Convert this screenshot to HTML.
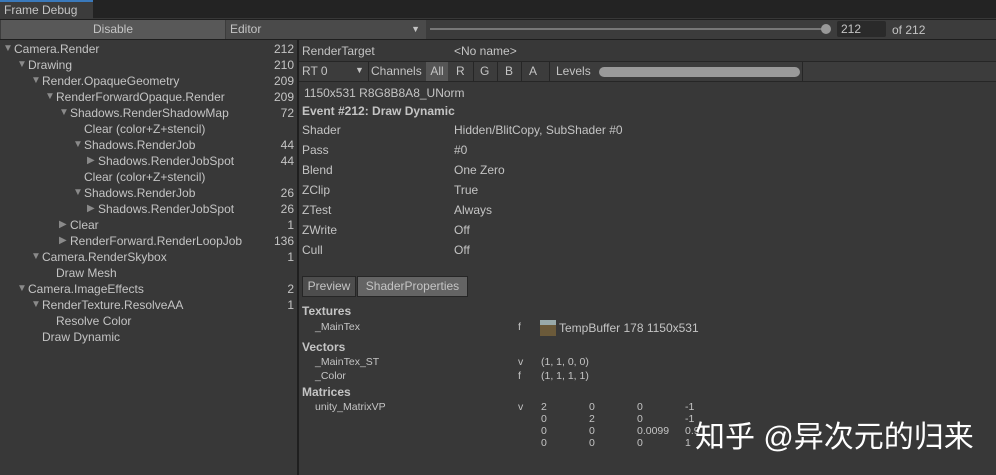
<!DOCTYPE html><html><head><style>
body{margin:0;width:996px;height:475px;background:#383838;font-family:"Liberation Sans",sans-serif;color:#c4c4c4;font-size:12px;position:relative;overflow:hidden}
.a{position:absolute;white-space:nowrap}
.t{position:absolute;white-space:nowrap}
.t i{position:absolute;left:-11px;top:0;font-style:normal;font-size:10px;color:#8a8a8a}
.s{font-size:10.5px}
</style></head><body>
<div class="a" style="left:0;top:0;width:996px;height:18px;background:#232323"></div>
<div class="a" style="left:0;top:0;width:93px;height:2px;background:#3a79bb"></div>
<div class="a" style="left:0;top:2px;width:93px;height:17px;background:#3c3c3c;line-height:17px;padding-left:4px;box-sizing:border-box">Frame Debug</div>
<div class="a" style="left:0;top:19px;width:996px;height:21px;background:#3c3c3c;border-top:1px solid #1e1e1e;border-bottom:1px solid #1e1e1e;box-sizing:border-box"></div>
<div class="a" style="left:1px;top:20px;width:224px;height:19px;background:#585858;text-align:center;line-height:19px">Disable</div>
<div class="a" style="left:226px;top:20px;width:200px;height:19px;background:#4a4a4a;line-height:19px;padding-left:4px;box-sizing:border-box">Editor<span style="position:absolute;right:6px;font-size:9px">▼</span></div>
<div class="a" style="left:430px;top:28px;width:396px;height:2px;background:#777"></div>
<div class="a" style="left:821px;top:24px;width:10px;height:10px;border-radius:50%;background:#999"></div>
<div class="a" style="left:837px;top:21px;width:49px;height:16px;background:#2a2a2a;border-radius:2px;line-height:16px;padding-left:4px;box-sizing:border-box">212</div>
<div class="a" style="left:892px;top:22px;line-height:16px">of 212</div>
<div class="a" style="left:297px;top:40px;width:2px;height:435px;background:#1f1f1f"></div>
<div style="position:absolute;left:0;top:41px;width:296px;line-height:16px">
<div class="t" style="top:0;left:14px"><i>▼</i>Camera.Render</div><div class="a" style="top:0;right:2px">212</div>
<div class="t" style="top:16px;left:28px"><i>▼</i>Drawing</div><div class="a" style="top:16px;right:2px">210</div>
<div class="t" style="top:32px;left:42px"><i>▼</i>Render.OpaqueGeometry</div><div class="a" style="top:32px;right:2px">209</div>
<div class="t" style="top:48px;left:56px"><i>▼</i>RenderForwardOpaque.Render</div><div class="a" style="top:48px;right:2px">209</div>
<div class="t" style="top:64px;left:70px"><i>▼</i>Shadows.RenderShadowMap</div><div class="a" style="top:64px;right:2px">72</div>
<div class="t" style="top:80px;left:84px">Clear (color+Z+stencil)</div>
<div class="t" style="top:96px;left:84px"><i>▼</i>Shadows.RenderJob</div><div class="a" style="top:96px;right:2px">44</div>
<div class="t" style="top:112px;left:98px"><i>▶</i>Shadows.RenderJobSpot</div><div class="a" style="top:112px;right:2px">44</div>
<div class="t" style="top:128px;left:84px">Clear (color+Z+stencil)</div>
<div class="t" style="top:144px;left:84px"><i>▼</i>Shadows.RenderJob</div><div class="a" style="top:144px;right:2px">26</div>
<div class="t" style="top:160px;left:98px"><i>▶</i>Shadows.RenderJobSpot</div><div class="a" style="top:160px;right:2px">26</div>
<div class="t" style="top:176px;left:70px"><i>▶</i>Clear</div><div class="a" style="top:176px;right:2px">1</div>
<div class="t" style="top:192px;left:70px"><i>▶</i>RenderForward.RenderLoopJob</div><div class="a" style="top:192px;right:2px">136</div>
<div class="t" style="top:208px;left:42px"><i>▼</i>Camera.RenderSkybox</div><div class="a" style="top:208px;right:2px">1</div>
<div class="t" style="top:224px;left:56px">Draw Mesh</div>
<div class="t" style="top:240px;left:28px"><i>▼</i>Camera.ImageEffects</div><div class="a" style="top:240px;right:2px">2</div>
<div class="t" style="top:256px;left:42px"><i>▼</i>RenderTexture.ResolveAA</div><div class="a" style="top:256px;right:2px">1</div>
<div class="t" style="top:272px;left:56px">Resolve Color</div>
<div class="t" style="top:288px;left:42px">Draw Dynamic</div>
</div>
<div class="a" style="left:302px;top:44px">RenderTarget</div><div class="a" style="left:454px;top:44px">&lt;No name&gt;</div>
<div class="a" style="left:299px;top:61px;width:697px;height:21px;background:#3c3c3c;border-top:1px solid #262626;border-bottom:1px solid #262626;box-sizing:border-box"></div>
<div class="a" style="left:302px;top:64px">RT 0</div><div class="a" style="left:355px;top:65px;font-size:9px">▼</div>
<div class="a" style="left:368px;top:62px;width:1px;height:19px;background:#262626"></div>
<div class="a" style="left:371px;top:64px">Channels</div>
<div class="a" style="left:426px;top:62px;width:22px;height:19px;background:#555;text-align:center;line-height:19px">All</div>
<div class="a" style="left:456px;top:64px">R</div><div class="a" style="left:480px;top:64px">G</div><div class="a" style="left:505px;top:64px">B</div><div class="a" style="left:529px;top:64px">A</div>
<div class="a" style="left:473px;top:62px;width:1px;height:19px;background:#262626"></div><div class="a" style="left:497px;top:62px;width:1px;height:19px;background:#262626"></div><div class="a" style="left:521px;top:62px;width:1px;height:19px;background:#262626"></div><div class="a" style="left:549px;top:62px;width:1px;height:19px;background:#262626"></div><div class="a" style="left:802px;top:62px;width:1px;height:19px;background:#262626"></div>
<div class="a" style="left:556px;top:64px">Levels</div>
<div class="a" style="left:599px;top:67px;width:201px;height:10px;background:#9a9a9a;border-radius:5px"></div>
<div class="a" style="left:304px;top:86px">1150x531 R8G8B8A8_UNorm</div>
<div class="a" style="left:302px;top:104px;font-weight:bold">Event #212: Draw Dynamic</div>
<div class="a" style="left:302px;top:123px">Shader</div><div class="a" style="left:454px;top:123px">Hidden/BlitCopy, SubShader #0</div>
<div class="a" style="left:302px;top:143px">Pass</div><div class="a" style="left:454px;top:143px">#0</div>
<div class="a" style="left:302px;top:163px">Blend</div><div class="a" style="left:454px;top:163px">One Zero</div>
<div class="a" style="left:302px;top:183px">ZClip</div><div class="a" style="left:454px;top:183px">True</div>
<div class="a" style="left:302px;top:203px">ZTest</div><div class="a" style="left:454px;top:203px">Always</div>
<div class="a" style="left:302px;top:223px">ZWrite</div><div class="a" style="left:454px;top:223px">Off</div>
<div class="a" style="left:302px;top:243px">Cull</div><div class="a" style="left:454px;top:243px">Off</div>
<div class="a" style="left:302px;top:276px;width:54px;height:21px;background:#4d4d4d;border:1px solid #262626;box-sizing:border-box;text-align:center;line-height:19px">Preview</div>
<div class="a" style="left:357px;top:276px;width:111px;height:21px;background:#646464;border:1px solid #262626;box-sizing:border-box;text-align:center;line-height:19px">ShaderProperties</div>
<div class="a" style="left:302px;top:304px;font-weight:bold">Textures</div>
<div class="a s" style="left:315px;top:321px">_MainTex</div><div class="a s" style="left:518px;top:321px">f</div>
<div class="a" style="left:540px;top:320px;width:16px;height:16px;background:linear-gradient(#9aa 0 30%,#6b5a3a 30%)"></div>
<div class="a" style="left:559px;top:321px">TempBuffer 178 1150x531</div>
<div class="a" style="left:302px;top:340px;font-weight:bold">Vectors</div>
<div class="a s" style="left:315px;top:356px">_MainTex_ST</div><div class="a s" style="left:518px;top:356px">v</div><div class="a s" style="left:541px;top:356px">(1, 1, 0, 0)</div>
<div class="a s" style="left:315px;top:370px">_Color</div><div class="a s" style="left:518px;top:370px">f</div><div class="a s" style="left:541px;top:370px">(1, 1, 1, 1)</div>
<div class="a" style="left:302px;top:385px;font-weight:bold">Matrices</div>
<div class="a s" style="left:315px;top:401px">unity_MatrixVP</div><div class="a s" style="left:518px;top:401px">v</div>
<div class="a s" style="left:541px;top:401px;line-height:12px">2<br>0<br>0<br>0</div>
<div class="a s" style="left:589px;top:401px;line-height:12px">0<br>2<br>0<br>0</div>
<div class="a s" style="left:637px;top:401px;line-height:12px">0<br>0<br>0.0099<br>0</div>
<div class="a s" style="left:685px;top:401px;line-height:12px">-1<br>-1<br>0.9<br>1</div>
<div class="a" style="left:695px;top:412px;font-size:30px;color:#fff;font-family:'Liberation Sans','Noto Sans CJK SC',sans-serif">知乎 @异次元的归来</div>
</body></html>
